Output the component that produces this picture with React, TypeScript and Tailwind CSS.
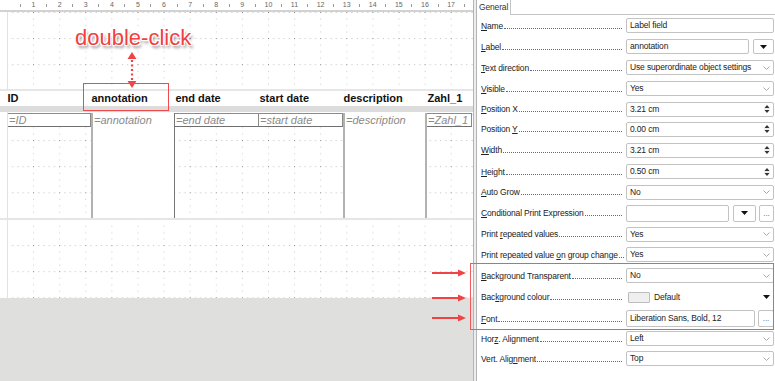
import React from "react";

function GridBg({ id, oy = 0 }: { id: string; oy?: number }) {
  return (
    <svg className="pointer-events-none absolute inset-0 h-full w-full" aria-hidden="true">
      <defs>
        <pattern id={id} x={-1} y={oy} width={26.1} height={26.1} patternUnits="userSpaceOnUse">
          <rect x={0} y={0} width={1} height={1} fill="#7c7c7c" />
          {[1, 2, 3, 4].map((k) => (
            <rect key={"h" + k} x={k * 5.22} y={0} width={1} height={1} fill="#bcbcbc" />
          ))}
          {[1, 2, 3].map((k) => (
            <rect key={"v" + k} x={0} y={k * 6.525} width={1} height={1} fill="#c8c8c8" />
          ))}
        </pattern>
      </defs>
      <rect x="0" y="0" width="100%" height="100%" fill={`url(#${id})`} />
    </svg>
  );
}

function Ruler() {
  const cells = Array.from({ length: 18 }, (_, i) => i + 1);
  return (
    <div className="flex h-[12px] shrink-0 border-b-2 border-[#d2d2d2] bg-white pl-[20px]">
      {cells.map((n) => (
        <div key={n} className="flex w-[26.1px] shrink-0 items-center">
          <div className="h-[3px] w-px bg-[#9a9a9a]" />
          <div className="flex-1 text-center text-[7px] leading-[10px] text-[#666]">{n <= 17 ? n : ""}</div>
        </div>
      ))}
    </div>
  );
}

function GridSection({ id, h, oy = 0 }: { id: string; h: string; oy?: number }) {
  return (
    <div className={`flex shrink-0 ${h}`}>
      <div className="w-[7px] shrink-0 bg-white" />
      <div className="relative flex-1 border-l border-[#e2e2e2] bg-white">
        <GridBg id={id} oy={oy} />
      </div>
    </div>
  );
}

function HeaderRow() {
  const labels = ["ID", "annotation", "end date", "start date", "description"];
  return (
    <div className="flex h-[15px] shrink-0 bg-white text-[11px] font-bold leading-[15px] text-[#111]">
      <div className="w-[7px] shrink-0" />
      {labels.map((l) => (
        <div key={l} className="w-[84px] shrink-0 pl-[0.5px]">
          {l}
        </div>
      ))}
      <div className="flex-1 pl-[0.5px]">Zahl_1</div>
    </div>
  );
}

function Detail() {
  const shortBox =
    "h-[14px] shrink-0 border-y border-r border-[#8a8a8a] border-b-[#6f6f6f] bg-white pl-[1px] text-[11px] italic leading-[12px] text-[#8a8a8a] whitespace-nowrap";
  return (
    <div className="flex h-[106px] shrink-0">
      <div className="w-[7px] shrink-0 bg-white" />
      <div className="relative flex flex-1 items-start border-l border-[#e2e2e2] bg-white pt-[1px]">
        <GridBg id="gd" oy={2} />
        <div className={`relative w-[83px] ${shortBox}`}>=ID</div>
        <div className="relative h-[105px] w-[84px] shrink-0 border-l-2 border-r border-l-[#b2b2b2] border-r-[#777] bg-white pt-[1px] pl-[1px] text-[11px] italic leading-[12px] text-[#8a8a8a]">
          =annotation
        </div>
        <div className={`relative w-[84px] ${shortBox}`}>=end date</div>
        <div className={`relative w-[84px] ${shortBox}`}>=start date</div>
        <div className="relative h-[105px] w-[84px] shrink-0 border-x-2 border-[#b2b2b2] bg-white pt-[1px] pl-[1px] text-[11px] italic leading-[12px] text-[#8a8a8a]">
          =description
        </div>
        <div className={`relative w-[45px] ${shortBox}`}>=Zahl_1</div>
      </div>
    </div>
  );
}

const Chevron = () => (
  <svg width="7" height="4" viewBox="0 0 7 4" className="shrink-0">
    <path d="M0.5 0.5 L3.5 3.5 L6.5 0.5" stroke="#a0a0a0" fill="none" strokeWidth="0.9" />
  </svg>
);

const BlackDown = () => (
  <svg width="7" height="4" viewBox="0 0 7 4" className="shrink-0">
    <path d="M0 0 H7 L3.5 4 Z" fill="#111" />
  </svg>
);

const SpinIcon = () => (
  <svg width="6" height="10" viewBox="0 0 6 10" className="shrink-0">
    <path d="M0.5 4 L3 1 L5.5 4 Z" fill="#333" />
    <line x1="0" y1="5" x2="6" y2="5" stroke="#c8c8c8" strokeWidth="0.6" />
    <path d="M0.5 6 L3 9 L5.5 6 Z" fill="#333" />
  </svg>
);

const box = "flex items-center rounded-[2px] border border-[#c3c3c3] bg-white px-[3px] leading-none";

function Input({ text, cls = "w-full h-[15px]" }: { text: string; cls?: string }) {
  return (
    <div className={`${box} ${cls}`}>
      <span className="flex-1 whitespace-nowrap">{text}</span>
    </div>
  );
}

function Select({ text }: { text: string }) {
  return (
    <div className={`${box} h-[15px] w-full`}>
      <span className="flex-1 whitespace-nowrap">{text}</span>
      <Chevron />
    </div>
  );
}

function Spin({ text }: { text: string }) {
  return (
    <div className={`${box} h-[15px] w-full`}>
      <span className="flex-1 whitespace-nowrap">{text}</span>
      <SpinIcon />
    </div>
  );
}

function DropBtn({ cls }: { cls: string }) {
  return (
    <div className={`flex shrink-0 items-center justify-center rounded-[2px] border border-[#c3c3c3] bg-white ${cls}`}>
      <BlackDown />
    </div>
  );
}

function DotsBtn({ cls }: { cls: string }) {
  return (
    <div className={`flex shrink-0 items-end justify-center rounded-[2px] border border-[#c3c3c3] bg-white pb-[3px] text-[8px] leading-none tracking-normal text-[#555] ${cls}`}>
      ...
    </div>
  );
}

type Row = { pre: string; key: string; post: string; h: string; v: React.ReactNode };

const rows: Row[] = [
  { pre: "", key: "N", post: "ame", h: "h-[21px]", v: <Input text="Label field" /> },
  {
    pre: "",
    key: "L",
    post: "abel",
    h: "h-[21px]",
    v: (
      <div className="flex w-full gap-[4px]">
        <Input text="annotation" cls="h-[15px] w-[123px]" />
        <DropBtn cls="h-[15px] flex-1" />
      </div>
    ),
  },
  { pre: "", key: "T", post: "ext direction", h: "h-[21px]", v: <Select text="Use superordinate object settings" /> },
  { pre: "", key: "V", post: "isible", h: "h-[21px]", v: <Select text="Yes" /> },
  { pre: "", key: "P", post: "osition X", h: "h-[20px]", v: <Spin text="3.21 cm" /> },
  { pre: "Position ", key: "Y", post: "", h: "h-[20px]", v: <Spin text="0.00 cm" /> },
  { pre: "", key: "W", post: "idth", h: "h-[22px]", v: <Spin text="3.21 cm" /> },
  { pre: "", key: "H", post: "eight", h: "h-[21px]", v: <Spin text="0.50 cm" /> },
  { pre: "", key: "A", post: "uto Grow", h: "h-[20px]", v: <Select text="No" /> },
  {
    pre: "",
    key: "C",
    post: "onditional Print Expression",
    h: "h-[22px]",
    v: (
      <div className="flex w-full">
        <Input text="" cls="h-[17px] w-[103px]" />
        <DropBtn cls="ml-[4px] h-[17px] w-[23px]" />
        <DotsBtn cls="ml-[3px] h-[17px] flex-1" />
      </div>
    ),
  },
  { pre: "Print ", key: "r", post: "epeated values", h: "h-[20px]", v: <Select text="Yes" /> },
  { pre: "Print repeated value ", key: "o", post: "n group change", h: "h-[21px]", v: <Select text="Yes" /> },
  { pre: "", key: "B", post: "ackground Transparent", h: "h-[21px]", v: <Select text="No" /> },
  {
    pre: "Bac",
    key: "k",
    post: "ground colour",
    h: "h-[22px]",
    v: (
      <div className="flex h-[17px] w-full items-center pl-[2px] pr-[4px]">
        <div className="h-[11px] w-[22px] shrink-0 rounded-[1px] border border-[#bdbdbd] bg-[#efefef]" />
        <span className="ml-[4px] flex-1">Default</span>
        <BlackDown />
      </div>
    ),
  },
  {
    pre: "",
    key: "F",
    post: "ont",
    h: "h-[21px]",
    v: (
      <div className="flex w-full">
        <Input text="Liberation Sans, Bold, 12" cls="h-[17px] w-[129px]" />
        <DotsBtn cls="ml-[3px] h-[17px] flex-1" />
      </div>
    ),
  },
  { pre: "Hor", key: "z", post: ". Alignment", h: "h-[19px]", v: <Select text="Left" /> },
  { pre: "Vert. Alig", key: "n", post: "ment", h: "h-[21px]", v: <Select text="Top" /> },
];

function Props() {
  return (
    <div className="flex min-w-0 flex-1 flex-col bg-white text-[8.5px] tracking-[-0.15px] text-[#222]">
      <div className="flex h-[15px] shrink-0">
        <div className="bg-white px-[2px] pt-[2px] leading-[11px] text-[#333] border-r border-[#c4c4c4]">General</div>
        <div className="flex-1 border-b border-[#c4c4c4]" />
      </div>
      <div className="flex flex-1 flex-col">
        {rows.map((r, i) => (
          <div key={i} className={`flex shrink-0 items-center ${r.h}`}>
            <div className="flex w-[149px] shrink-0 items-baseline whitespace-nowrap pl-[4px] pr-[4px] leading-[12px]">
              <span className="shrink-0">
                {r.pre}
                <span className="underline underline-offset-[1px]">{r.key}</span>
                {r.post}
              </span>
              <span className="ml-[1px] h-[6px] min-w-[5px] flex-1 border-b border-dotted border-[#6a6a6a]" />
            </div>
            <div className="flex min-w-0 flex-1 items-center pr-[1px]">{r.v}</div>
          </div>
        ))}
      </div>
    </div>
  );
}

export default function App() {
  return (
    <div className="relative flex h-[381px] w-[775px] overflow-hidden bg-white font-['Liberation_Sans',Arial,sans-serif]">
      <div className="flex w-[473px] shrink-0 flex-col bg-white">
        <Ruler />
        <GridSection id="g1" h="h-[77px]" />
        <div className="h-[2px] shrink-0 bg-[#e6e6e6]" />
        <HeaderRow />
        <div className="h-[6px] shrink-0 bg-[#dcdcdc]" />
        <Detail />
        <div className="h-[2px] shrink-0 bg-[#e6e6e6]" />
        <GridSection id="g3" h="h-[78px]" oy={-1} />
        <div className="flex-1 bg-[#dfdfdd]" />
      </div>
      <div className="w-[4px] shrink-0 border-x border-[#b4b4b4] bg-[#ededed]" />
      <Props />

      {/* annotations */}
      <div className="pointer-events-none absolute left-[75px] top-[27px] whitespace-nowrap text-[22px] leading-[22px] text-[#f23f3f] [text-shadow:1px_1px_0_#fff,-1px_-1px_0_#fff,1px_-1px_0_#fff,-1px_1px_0_#fff,2px_3px_3px_rgba(0,0,0,0.45)]">
        double-click
      </div>
      <svg className="pointer-events-none absolute left-[126px] top-[50px]" width="12" height="40" viewBox="0 0 12 40">
        <path d="M6 2 L10.5 9 L1.5 9 Z" fill="#f04444" />
        <line x1="6" y1="10" x2="6" y2="30" stroke="#f04444" strokeWidth="2.2" strokeDasharray="2 2.5" />
        <path d="M6 38 L10.5 31 L1.5 31 Z" fill="#f04444" />
      </svg>
      <div className="pointer-events-none absolute left-[83px] top-[83px] h-[28px] w-[86px] border-[1.5px] border-[#f04a4a]" />
      <div className="pointer-events-none absolute left-[470px] top-[263px] h-[67px] w-[304px] border-[1.5px] border-[#f25a5a]" />
      <svg className="pointer-events-none absolute left-[428px] top-[266px]" width="42" height="58" viewBox="0 0 42 58">
        {[7, 32, 52].map((y) => (
          <g key={y}>
            <line x1="4" y1={y} x2="31" y2={y} stroke="#f04444" strokeWidth="2" />
            <path d={`M30 ${y - 3.5} L38 ${y} L30 ${y + 3.5} Z`} fill="#f04444" />
          </g>
        ))}
      </svg>
    </div>
  );
}
